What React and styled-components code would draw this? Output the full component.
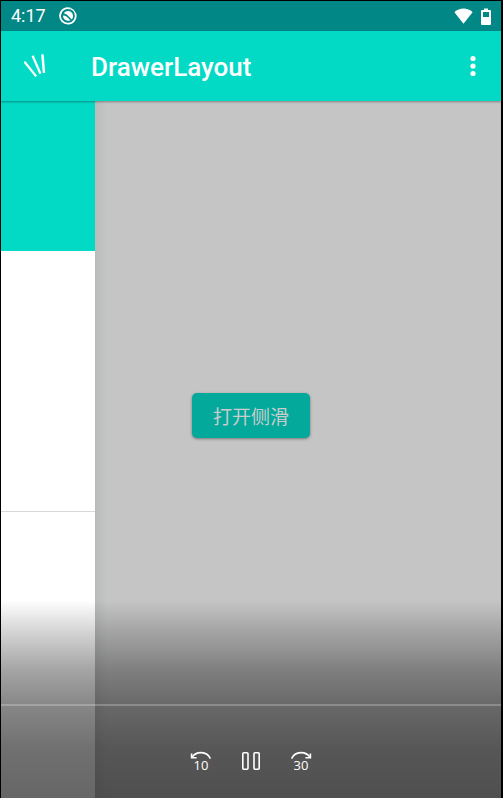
import styled, { createGlobalStyle } from 'styled-components'

const GlobalStyle = createGlobalStyle`
  * {
    box-sizing: border-box;
  }

  body {
    margin: 0;
    background: #000;
    font-family: Roboto, 'Noto Sans CJK SC', sans-serif;
  }

  button {
    margin: 0;
    padding: 0;
    border: none;
    background: none;
    color: inherit;
    font: inherit;
    cursor: pointer;
  }

  svg {
    display: block;
  }
`

const Screen = styled.div`
  position: relative;
  display: flex;
  flex-direction: column;
  min-height: 100vh;
  border: solid #000;
  border-width: 1px 2px 0 1px;
  overflow: hidden;
`

const StatusBar = styled.header`
  display: flex;
  align-items: center;
  justify-content: space-between;
  height: 30px;
  padding: 0 10px;
  background: #018786;
  color: #fff;
`

const StatusGroup = styled.div`
  display: flex;
  align-items: center;
  gap: ${({ $gap }) => $gap}px;
`

const Clock = styled.time`
  font-size: 18px;
  line-height: 30px;
`

const AppBar = styled.div`
  position: relative;
  display: flex;
  align-items: center;
  height: 70px;
  padding: 0 16px 0 20px;
  background: #03dac5;
  color: #fff;
  box-shadow: 0 1px 2px rgba(0, 0, 0, 0.35);
`

const IconButton = styled.button`
  display: flex;
  align-items: center;
  justify-content: center;
  width: ${({ $size }) => $size}px;
  height: ${({ $size }) => $size}px;
`

const Title = styled.h1`
  flex: 1;
  margin: 0;
  padding: 2px 0 0 40px;
  font-size: 26px;
  font-weight: 500;
  line-height: 32px;
`

const Content = styled.div`
  display: flex;
  flex: 1;
`

const Drawer = styled.aside`
  flex: none;
  width: 94px;
  background: #fff;
`

const DrawerHeader = styled.div`
  height: 150px;
  background: #03dac5;
`

const DrawerGroup = styled.div`
  height: 261px;
  border-bottom: 1px solid #d8d8d8;
`

const Main = styled.main`
  display: flex;
  flex: 1;
  justify-content: center;
  padding: 292px 94px 0 0;
  background: linear-gradient(to right, #b9bbbb, #c5c5c5 12px);
`

const OpenButton = styled.button`
  && {
    width: 118px;
    height: 45px;
    border-radius: 5px;
    background: #03a99b;
    color: #c9cccb;
    font-size: 19px;
    box-shadow: 0 1px 3px rgba(0, 0, 0, 0.4);
  }
`

const Player = styled.div`
  position: absolute;
  right: 0;
  bottom: 0;
  left: 0;
  display: flex;
  flex-direction: column;
  height: 198px;
  padding-top: 104px;
  background: linear-gradient(
    rgba(0, 0, 0, 0),
    rgba(0, 0, 0, 0.17) 16%,
    rgba(0, 0, 0, 0.36) 36%,
    rgba(0, 0, 0, 0.47) 53%,
    rgba(0, 0, 0, 0.56) 75%,
    rgba(0, 0, 0, 0.6)
  );
`

const Progress = styled.div`
  height: 2px;
  background: rgba(255, 255, 255, 0.24);
`

const Controls = styled.div`
  display: flex;
  flex: 1;
  align-items: center;
  justify-content: center;
  gap: 18px;
  padding-top: 18px;
  color: #fff;
`

const SkipLabel = styled.text`
  fill: currentColor;
  font-family: 'Open Sans', sans-serif;
  font-size: 13px;
  text-anchor: middle;
`

const DataSaverIcon = () => (
  <svg width="18" height="18" viewBox="0 0 18 18" fill="none" aria-hidden="true">
    <path d="M11.6 1.6A7.8 7.8 0 1 0 16.1 6" stroke="#fff" strokeWidth="1.8" />
    <path d="M11.6 1.6A7.8 7.8 0 0 1 16.1 6" stroke="#fff" strokeWidth="1.2" />
    <path d="M4.8 6.2C7 3.3 11.6 3.4 13.4 6.6 14.6 9 14 11.2 12.8 12.6L9.8 9.4Q8.4 7.2 4.8 6.2Z" fill="#fff" />
    <path d="M4 8.6C7.2 8.6 8.4 10.6 11.4 13.4 7.6 14.8 4 12.6 4 8.6Z" fill="#fff" />
  </svg>
)

const WifiIcon = () => (
  <svg width="19" height="16" viewBox="0 0 19 16" fill="#fff" aria-hidden="true">
    <path d="M.4 4.2C5.4-.6 13.6-.6 18.6 4.2L9.5 15.7Z" />
  </svg>
)

const BatteryIcon = () => (
  <svg width="10" height="17" viewBox="0 0 10 17" fill="#fff" aria-hidden="true">
    <path
      fillRule="evenodd"
      d="M3 .5H7V2H9Q10 2 10 3V16Q10 17 9 17H1Q0 17 0 16V3Q0 2 1 2H3ZM2 4V9H8V4Z"
    />
  </svg>
)

const BrandIcon = () => (
  <svg width="24" height="24" viewBox="0 0 24 24" stroke="#fff" fill="none" aria-hidden="true">
    <path d="M0.4 7.6L12.2 22.4" strokeWidth="2.3" />
    <path d="M8.6 1.8L16.4 19.6" strokeWidth="2.3" />
    <path d="M18.4 0.4L20 18.8" strokeWidth="2.5" />
  </svg>
)

const MoreIcon = () => (
  <svg width="6" height="22" viewBox="0 0 6 22" fill="#fff" aria-hidden="true">
    <circle cx="3" cy="3.5" r="2.6" />
    <circle cx="3" cy="11" r="2.6" />
    <circle cx="3" cy="18.5" r="2.6" />
  </svg>
)

const BackIcon = () => (
  <svg width="24" height="24" viewBox="0 0 24 24" fill="none" stroke="currentColor" strokeWidth="1.6" aria-hidden="true">
    <path d="M2.6 4.4V8.8H7.6" />
    <path d="M2.8 8.6C6.8 2 18 1.6 21.4 9.6" />
    <SkipLabel x="12" y="21" stroke="none">10</SkipLabel>
  </svg>
)

const ForwardIcon = () => (
  <svg width="24" height="24" viewBox="0 0 24 24" fill="none" stroke="currentColor" strokeWidth="1.6" aria-hidden="true">
    <path d="M21.4 4.4V8.8H16.4" />
    <path d="M21.2 8.6C17.2 2 6 1.6 2.6 9.6" />
    <SkipLabel x="12" y="21" stroke="none">30</SkipLabel>
  </svg>
)

const PauseIcon = () => (
  <svg width="20" height="20" viewBox="0 0 20 20" fill="none" stroke="currentColor" strokeWidth="1.6" aria-hidden="true">
    <rect x="1.8" y="1.7" width="5.2" height="16.6" rx="1" />
    <rect x="13" y="1.7" width="5.2" height="16.6" rx="1" />
  </svg>
)

const App = () => (
  <>
    <GlobalStyle />
    <Screen>
      <StatusBar>
        <StatusGroup $gap={13}>
          <Clock>4:17</Clock>
          <DataSaverIcon />
        </StatusGroup>
        <StatusGroup $gap={8}>
          <WifiIcon />
          <BatteryIcon />
        </StatusGroup>
      </StatusBar>
      <AppBar>
        <IconButton type="button" aria-label="Navigation" $size={30}>
          <BrandIcon />
        </IconButton>
        <Title>DrawerLayout</Title>
        <IconButton type="button" aria-label="More options" $size={24}>
          <MoreIcon />
        </IconButton>
      </AppBar>
      <Content>
        <Drawer>
          <DrawerHeader />
          <DrawerGroup />
        </Drawer>
        <Main>
          <OpenButton type="button">打开侧滑</OpenButton>
        </Main>
      </Content>
      <Player>
        <Progress />
        <Controls>
          <IconButton type="button" aria-label="Back 10 seconds" $size={32}>
            <BackIcon />
          </IconButton>
          <IconButton type="button" aria-label="Pause" $size={32}>
            <PauseIcon />
          </IconButton>
          <IconButton type="button" aria-label="Forward 30 seconds" $size={32}>
            <ForwardIcon />
          </IconButton>
        </Controls>
      </Player>
    </Screen>
  </>
)

export default App
